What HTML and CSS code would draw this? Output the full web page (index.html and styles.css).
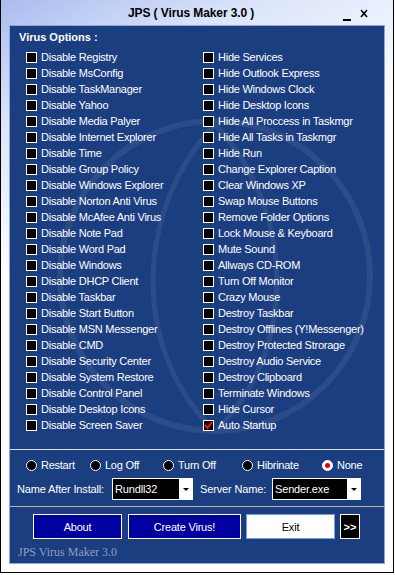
FILE: index.html
```html
<!DOCTYPE html>
<html>
<head>
    <meta charset="UTF-8">
    <meta name="viewport" content="width=device-width, initial-scale=1.0">
    <title>JPS ( Virus Maker 3.0 )</title>
    <link rel="stylesheet" href="styles.css">
</head>
<body>
    <div class="window">
        <div class="titlebar">
            <div class="title">JPS ( Virus Maker 3.0 )</div>
            <div class="controls">
                <svg class="min" width="8" height="14" viewBox="0 0 8 14"><rect x="0" y="11" width="8" height="2" fill="#000"/></svg>
                <svg class="close" width="8" height="9" viewBox="0 0 8 9"><path d="M1 1 L7 8 M7 1 L1 8" stroke="#000" stroke-width="1.6" fill="none"/></svg>
            </div>
        </div>
        <div class="panel">
            <svg class="watermark" width="374" height="537" viewBox="0 0 374 537">
                <circle cx="205" cy="250" r="155" fill="none" stroke="#fff" stroke-width="6"/>
                <path d="M205 405 C 125 330, 120 190, 205 98 C 290 190, 285 330, 205 405 Z" fill="none" stroke="#fff" stroke-width="5"/>
            </svg>
            <div class="section-title">Virus Options :</div>
            <div class="options">
                <div class="opt"><span class="box"></span>Disable Registry</div>
                <div class="opt"><span class="box"></span>Disable MsConfig</div>
                <div class="opt"><span class="box"></span>Disable TaskManager</div>
                <div class="opt"><span class="box"></span>Disable Yahoo</div>
                <div class="opt"><span class="box"></span>Disable Media Palyer</div>
                <div class="opt"><span class="box"></span>Disable Internet Explorer</div>
                <div class="opt"><span class="box"></span>Disable Time</div>
                <div class="opt"><span class="box"></span>Disable Group Policy</div>
                <div class="opt"><span class="box"></span>Disable Windows Explorer</div>
                <div class="opt"><span class="box"></span>Disable Norton Anti Virus</div>
                <div class="opt"><span class="box"></span>Disable McAfee Anti Virus</div>
                <div class="opt"><span class="box"></span>Disable Note Pad</div>
                <div class="opt"><span class="box"></span>Disable Word Pad</div>
                <div class="opt"><span class="box"></span>Disable Windows</div>
                <div class="opt"><span class="box"></span>Disable DHCP Client</div>
                <div class="opt"><span class="box"></span>Disable Taskbar</div>
                <div class="opt"><span class="box"></span>Disable Start Button</div>
                <div class="opt"><span class="box"></span>Disable MSN Messenger</div>
                <div class="opt"><span class="box"></span>Disable CMD</div>
                <div class="opt"><span class="box"></span>Disable Security Center</div>
                <div class="opt"><span class="box"></span>Disable System Restore</div>
                <div class="opt"><span class="box"></span>Disable Control Panel</div>
                <div class="opt"><span class="box"></span>Disable Desktop Icons</div>
                <div class="opt"><span class="box"></span>Disable Screen Saver</div>

                <div class="opt"><span class="box"></span>Hide Services</div>
                <div class="opt"><span class="box"></span>Hide Outlook Express</div>
                <div class="opt"><span class="box"></span>Hide Windows Clock</div>
                <div class="opt"><span class="box"></span>Hide Desktop Icons</div>
                <div class="opt"><span class="box"></span>Hide All Proccess in Taskmgr</div>
                <div class="opt"><span class="box"></span>Hide All Tasks in Taskmgr</div>
                <div class="opt"><span class="box"></span>Hide Run</div>
                <div class="opt"><span class="box"></span>Change Explorer Caption</div>
                <div class="opt"><span class="box"></span>Clear Windows XP</div>
                <div class="opt"><span class="box"></span>Swap Mouse Buttons</div>
                <div class="opt"><span class="box"></span>Remove Folder Options</div>
                <div class="opt"><span class="box"></span>Lock Mouse &amp; Keyboard</div>
                <div class="opt"><span class="box"></span>Mute Sound</div>
                <div class="opt"><span class="box"></span>Allways CD-ROM</div>
                <div class="opt"><span class="box"></span>Turn Off Monitor</div>
                <div class="opt"><span class="box"></span>Crazy Mouse</div>
                <div class="opt"><span class="box"></span>Destroy Taskbar</div>
                <div class="opt"><span class="box"></span>Destroy Offlines (Y!Messenger)</div>
                <div class="opt"><span class="box"></span>Destroy Protected Strorage</div>
                <div class="opt"><span class="box"></span>Destroy Audio Service</div>
                <div class="opt"><span class="box"></span>Destroy Clipboard</div>
                <div class="opt"><span class="box"></span>Terminate Windows</div>
                <div class="opt"><span class="box"></span>Hide Cursor</div>
                <div class="opt"><span class="box checked"><svg width="9" height="9" viewBox="0 0 9 9"><path d="M1 4 L3.5 7 L8 1" stroke="#ff1010" stroke-width="2" fill="none"/></svg></span>Auto Startup</div>
            </div>

            <div class="settings">
                <div class="radios">
                    <div class="radio"><span class="dot"></span>Restart</div>
                    <div class="radio"><span class="dot"></span>Log Off</div>
                    <div class="radio"><span class="dot"></span>Turn Off</div>
                    <div class="radio"><span class="dot"></span>Hibrinate</div>
                    <div class="radio"><span class="dot selected"></span>None</div>
                </div>
                <div class="names">
                    <span class="name-label label-install">Name After Install:</span>
                    <div class="combo combo-install">
                        <span class="combo-text">Rundll32</span>
                        <span class="combo-btn"><span class="arrow"></span></span>
                    </div>
                    <span class="name-label label-server">Server Name:</span>
                    <div class="combo combo-server">
                        <span class="combo-text">Sender.exe</span>
                        <span class="combo-btn"><span class="arrow"></span></span>
                    </div>
                </div>
            </div>

            <div class="buttons">
                <div class="btn btn-about">About</div>
                <div class="btn btn-create">Create Virus!</div>
                <div class="btn btn-exit">Exit</div>
                <div class="btn btn-more">&gt;&gt;</div>
            </div>
            <div class="footer">JPS Virus Maker 3.0</div>
        </div>
    </div>
</body>
</html>
```

FILE: styles.css
```css
body {
    margin: 0;
    font-family: "Liberation Sans", Arial, sans-serif;
    font-size: 11px;
    background: #fff;
}
.window {
    width: 394px;
    height: 573px;
    box-sizing: border-box;
    border: 1px solid #000;
    border-top: none;
    padding-left: 8px;
    background: linear-gradient(155deg, #a9bcef 0%, #dbe4fa 16%, #ffffff 38%);
}
.titlebar {
    height: 25px;
    display: flex;
    align-items: flex-start;
}
.title {
    margin-left: 119px;
    padding-top: 1px;
    line-height: 25px;
    font-weight: bold;
    font-size: 12px;
    letter-spacing: -0.1px;
    color: #000;
}
.controls {
    margin-left: auto;
    margin-right: 25px;
    display: flex;
    align-items: flex-start;
    gap: 9px;
    padding-top: 8px;
}
.min {
    display: block;
}
.close {
    display: block;
    margin-top: 1px;
}
.panel {
    position: relative;
    width: 376px;
    height: 539px;
    box-sizing: border-box;
    border: 1px solid #8ea6d8;
    background: #1b3e80;
    color: #fff;
    overflow: hidden;
}
.watermark {
    position: absolute;
    left: 0;
    top: 0;
    opacity: 0.07;
}
.section-title,
.options,
.settings,
.buttons,
.footer {
    position: relative;
}
.section-title {
    padding: 4px 0 0 9px;
    line-height: 14px;
    font-weight: bold;
    margin-bottom: 5px;
}
.options {
    display: grid;
    grid-template-columns: 177px 1fr;
    grid-template-rows: repeat(24, 16px);
    grid-auto-flow: column;
    padding-left: 16px;
}
.opt {
    display: flex;
    align-items: center;
    line-height: 16px;
    letter-spacing: -0.25px;
    white-space: nowrap;
}
.box {
    width: 11px;
    height: 11px;
    box-sizing: border-box;
    border: 1px solid #fff;
    background: #000;
    margin-right: 4px;
    flex: none;
    display: flex;
    align-items: center;
    justify-content: center;
}
.settings {
    margin-top: 16px;
    border-top: 1px solid #dfe4ee;
}
.radios {
    display: grid;
    grid-template-columns: 64px 73px 79px 80px auto;
    padding: 7px 0 0 16px;
    height: 16px;
}
.radio {
    display: flex;
    align-items: center;
    line-height: 16px;
    letter-spacing: -0.25px;
}
.dot {
    width: 11px;
    height: 11px;
    box-sizing: border-box;
    border: 1px solid #fff;
    border-radius: 50%;
    background: #000;
    margin-right: 4px;
    flex: none;
    display: flex;
    align-items: center;
    justify-content: center;
}
.dot.selected {
    background: #fff;
}
.dot.selected::after {
    content: "";
    width: 5px;
    height: 5px;
    border-radius: 50%;
    background: #e00000;
}
.names {
    display: flex;
    align-items: center;
    height: 22px;
    margin-top: 5px;
    padding-left: 7px;
    letter-spacing: -0.15px;
}
.label-install {
    width: 95px;
}
.label-server {
    width: 72px;
    margin-left: 7px;
}
.combo {
    display: flex;
    height: 22px;
    box-sizing: border-box;
    border: 1px solid #fff;
    background: #000;
}
.combo-install {
    width: 81px;
}
.combo-server {
    width: 89px;
}
.combo-text {
    flex: 1;
    padding-left: 2px;
    line-height: 20px;
}
.combo-btn {
    width: 13px;
    background: #fff;
    display: flex;
    align-items: center;
    justify-content: center;
}
.arrow {
    width: 0;
    height: 0;
    border-left: 3px solid transparent;
    border-right: 3px solid transparent;
    border-top: 3px solid #000;
}
.buttons {
    margin-top: 6px;
    border-top: 1px solid #bbb5a8;
    padding: 7px 0 0 23px;
    display: flex;
    gap: 5px;
}
.btn {
    height: 25px;
    box-sizing: border-box;
    border: 1px solid #fff;
    background: #0000a0;
    color: #fff;
    display: flex;
    align-items: center;
    justify-content: center;
    letter-spacing: -0.2px;
}
.btn-about {
    width: 89px;
    margin-right: 1px;
}
.btn-create {
    width: 113px;
}
.btn-exit {
    width: 89px;
    background: #fff;
    color: #000;
    border-color: #6aa4ea;
}
.btn-more {
    width: 20px;
    background: #000;
    font-weight: bold;
    letter-spacing: 0;
}
.footer {
    margin-top: 6px;
    padding-left: 8px;
    line-height: 14px;
    font-family: "Liberation Serif", "Times New Roman", serif;
    font-size: 12px;
    color: #8d9dc6;
}
```
